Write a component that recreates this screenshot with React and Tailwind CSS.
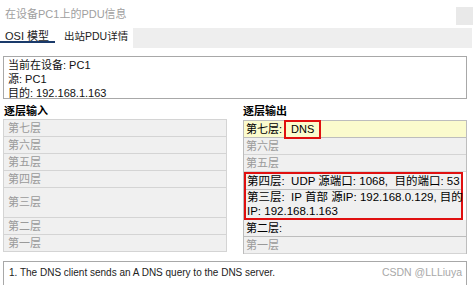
import React from "react";

const cjk = { fontFamily: '"Liberation Sans", "Noto Sans CJK SC", sans-serif' };

function LeftRow({ label, tall }) {
  return (
    <div
      className={`flex items-center border-b border-[#d4d4d4] bg-[#f0f0f0] pl-[4px] text-[11px] text-[#9a9a9a] ${
        tall ? "h-[30px]" : "h-[17px]"
      }`}
    >
      {label}
    </div>
  );
}

export default function App() {
  return (
    <div
      className="relative h-[285px] w-[474px] overflow-hidden bg-white text-[#222]"
      style={cjk}
    >
      {/* title bar */}
      <div className="flex h-[28px] items-start justify-between pl-[5px] pr-[1px] pt-[7px]">
        <span className="text-[11px] leading-[14px] text-[#a0a0a0]">在设备PC1上的PDU信息</span>
        <div className="h-[18px] w-[17px] bg-[#e9e9e9]" />
      </div>

      {/* tabs */}
      <div className="flex h-[20px] pr-[2px]">
        <div className="relative flex w-[56px] items-center pl-[5px] text-[11px]">
          <span className="-mt-[3px]">OSI 模型</span>
          <div className="absolute bottom-[5px] left-0 h-[2px] w-[55px] bg-[#1a3a6a]" />
        </div>
        <div className="flex w-[77px] items-center pl-[8px] text-[10.5px]">
          <span className="-mt-[3px]">出站PDU详情</span>
        </div>
        <div className="flex-1 bg-[#eeeeee]" />
      </div>

      {/* info box */}
      <div className="ml-[3px] mr-[7px] mt-[8px] h-[43px] border border-[#a8a8a8] pl-[4px] pt-[1px] text-[11px] leading-[14px] text-[#111]">
        <div>当前在设备: PC1</div>
        <div>源: PC1</div>
        <div>目的: 192.168.1.163</div>
      </div>

      {/* layers */}
      <div className="mt-[5px] flex gap-[16px] pl-[3px]">
        {/* input */}
        <div className="w-[224px]">
          <div className="h-[15px] pl-[1px] text-[11px] font-bold leading-[15px] text-black">逐层输入</div>
          <div className="border-x border-t border-[#d4d4d4]">
            <LeftRow label="第七层" />
            <LeftRow label="第六层" />
            <LeftRow label="第五层" />
            <LeftRow label="第四层" />
            <LeftRow label="第三层" tall />
            <LeftRow label="第二层" />
            <LeftRow label="第一层" />
          </div>
        </div>

        {/* output */}
        <div className="w-[224px]">
          <div className="h-[16px] text-[11px] font-bold leading-[15px] text-black">逐层输出</div>
          <div className="border-x border-t border-[#bdbdbd]">
            <div className="flex h-[17px] items-center border-b border-[#bdbdbd] bg-[#fbfbcd] pl-[2px] text-[11px] text-black">
              <span>第七层:</span>
              <span className="ml-[2px] flex h-[19px] items-center border-2 border-[#e01010] px-[5px]">
                DNS
              </span>
            </div>
            <div className="flex h-[17px] items-center border-b border-[#d4d4d4] bg-[#f0f0f0] pl-[2px] text-[11px] text-[#9a9a9a]">
              第六层
            </div>
            <div className="flex h-[17px] items-center border-b border-[#d4d4d4] bg-[#f0f0f0] pl-[2px] text-[11px] text-[#9a9a9a]">
              第五层
            </div>
            <div className="mr-[3px] border-2 border-[#e01010]">
              <div className="flex h-[16px] items-center whitespace-nowrap border-b border-[#bdbdbd] bg-[#f0f0f0] pl-[1px] text-[11.5px] text-black">
                第四层:&nbsp;&nbsp;UDP 源端口: 1068,&nbsp;&nbsp;目的端口: 53
              </div>
              <div className="h-[28px] bg-[#f0f0f0] pl-[1px] text-[11.5px] leading-[14px] text-black">
                <div className="whitespace-nowrap">第三层:&nbsp;&nbsp;IP 首部 源IP: 192.168.0.129, 目的</div>
                <div>IP: 192.168.1.163</div>
              </div>
            </div>
            <div className="flex h-[17px] items-center border-b border-[#bdbdbd] bg-[#f0f0f0] pl-[2px] text-[11px] text-black">
              第二层:
            </div>
            <div className="flex h-[17px] items-center border-b border-[#d4d4d4] bg-[#f0f0f0] pl-[2px] text-[11px] text-[#9a9a9a]">
              第一层
            </div>
          </div>
        </div>
      </div>

      {/* bottom box */}
      <div className="ml-[3px] mr-[7px] mt-[7px] flex h-[40px] items-start justify-between border border-[#a8a8a8] pl-[5px] pr-[4px] pt-[4px]">
        <span className="text-[10px] leading-[14px] text-[#222]">
          1. The DNS client sends an A DNS query to the DNS server.
        </span>
        <span className="-mt-[1px] text-[10.5px] leading-[14px] text-[#a8a8a8]">
          CSDN @LLLiuya
        </span>
      </div>
    </div>
  );
}
